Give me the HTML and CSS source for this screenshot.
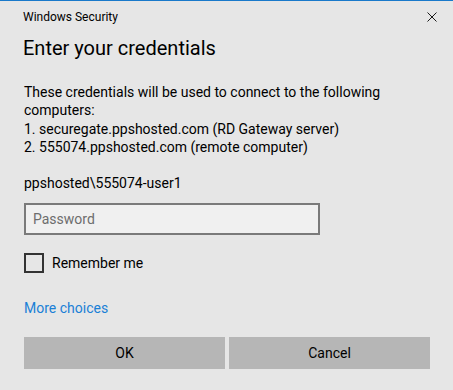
FILE: index.html
```html
<!DOCTYPE html>
<html>
<head>
<meta charset="utf-8">
<link rel="stylesheet" href="styles.css">
</head>
<body>
<div class="window">
  <div class="titlebar">
    <span class="title">Windows Security</span>
    <svg class="close" width="10" height="10" viewBox="0 0 10 10"><path d="M0.5 0.5 L9.5 9.5 M9.5 0.5 L0.5 9.5" stroke="#1a1a1a" stroke-width="1" fill="none"/></svg>
  </div>
  <h1 class="heading">Enter your credentials</h1>
  <p class="desc">These credentials will be used to connect to the following computers:<br>1. securegate.ppshosted.com (RD Gateway server)<br>2. 555074.ppshosted.com (remote computer)</p>
  <p class="user">ppshosted\555074-user1</p>
  <div class="field"><span class="placeholder">Password</span></div>
  <label class="remember"><span class="box"></span><span>Remember me</span></label>
  <a class="more">More choices</a>
  <div class="buttons">
    <div class="btn">OK</div>
    <div class="btn">Cancel</div>
  </div>
</div>
</body>
</html>
```
FILE: styles.css
```css
html, body {
  margin: 0;
  background: #e6e6e6;
}
body {
  font-family: "Segoe UI", Roboto, sans-serif;
  color: #000;
  width: 453px;
  height: 390px;
  overflow: hidden;
}
.window {
  border-top: 1px solid #1979ca;
  padding: 0 23px 0 24px;
}
.titlebar {
  display: flex;
  justify-content: space-between;
  align-items: center;
  height: 32px;
  margin-left: -1px;
  margin-right: -7px;
}
.title {
  font-size: 12px;
  line-height: 16px;
  color: #000;
}
.close {
  display: block;
}
.heading {
  margin: 1px 0 0 -1px;
  font-size: 20px;
  font-weight: normal;
  line-height: 28px;
  color: #000;
}
.desc {
  margin: 21px 0 0;
  font-size: 14px;
  line-height: 18.3px;
}
.user {
  margin: 18px 0 0;
  font-size: 14px;
  line-height: 18px;
}
.field {
  margin-top: 11px;
  width: 296px;
  height: 32px;
  box-sizing: border-box;
  border: 2px solid #7a7a7a;
  background: #f0f0f0;
  display: flex;
  align-items: center;
  padding-left: 7px;
}
.placeholder {
  font-size: 14px;
  color: #6d6d6d;
}
.remember {
  margin-top: 18px;
  display: flex;
  align-items: center;
  gap: 8px;
  font-size: 14px;
  height: 20px;
}
.box {
  width: 20px;
  height: 20px;
  box-sizing: border-box;
  border: 2px solid #333;
}
.more {
  display: block;
  margin-top: 26px;
  font-size: 14px;
  line-height: 18px;
  color: #1a80d6;
}
.buttons {
  margin-top: 20px;
  display: grid;
  grid-template-columns: 201px 201px;
  gap: 4px;
}
.btn {
  height: 32px;
  background: #b6b6b6;
  display: flex;
  align-items: center;
  justify-content: center;
  font-size: 14px;
}
```
